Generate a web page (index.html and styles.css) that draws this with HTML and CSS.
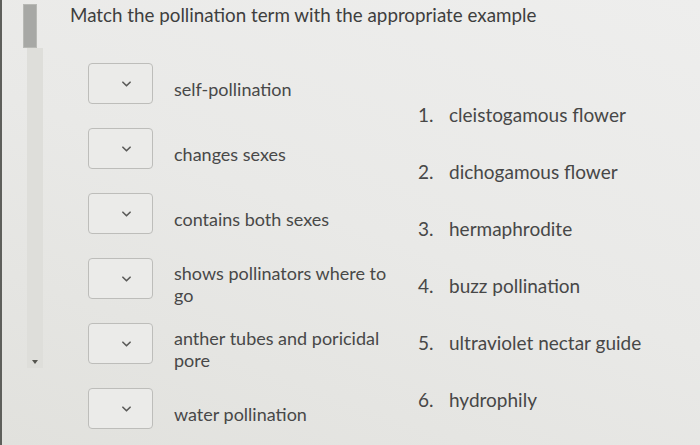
FILE: index.html
```html
<!DOCTYPE html>
<html lang="en">
<head>
<meta charset="utf-8">
<title>Match the pollination term</title>
<link rel="stylesheet" href="styles.css">
</head>
<body>
<div class="screen">
  <div class="edge"></div>
  <div class="scroll">
    <div class="thumb"></div>
    <div class="track"><span class="arrow"></span></div>
  </div>
  <main class="main">
    <h1 class="title">Match the pollination term with the appropriate example</h1>
    <div class="quiz">
      <ul class="terms">
        <li class="row"><span class="select"><svg class="chev" viewBox="0 0 10 6"><path d="M1 1l4 4 4-4"/></svg></span><span class="term">self-pollination</span></li>
        <li class="row"><span class="select"><svg class="chev" viewBox="0 0 10 6"><path d="M1 1l4 4 4-4"/></svg></span><span class="term">changes sexes</span></li>
        <li class="row"><span class="select"><svg class="chev" viewBox="0 0 10 6"><path d="M1 1l4 4 4-4"/></svg></span><span class="term">contains both sexes</span></li>
        <li class="row"><span class="select"><svg class="chev" viewBox="0 0 10 6"><path d="M1 1l4 4 4-4"/></svg></span><span class="term">shows pollinators where to go</span></li>
        <li class="row"><span class="select"><svg class="chev" viewBox="0 0 10 6"><path d="M1 1l4 4 4-4"/></svg></span><span class="term">anther tubes and poricidal pore</span></li>
        <li class="row"><span class="select"><svg class="chev" viewBox="0 0 10 6"><path d="M1 1l4 4 4-4"/></svg></span><span class="term">water pollination</span></li>
      </ul>
      <ol class="answers">
        <li class="answer"><span class="num">1.</span><span>cleistogamous flower</span></li>
        <li class="answer"><span class="num">2.</span><span>dichogamous flower</span></li>
        <li class="answer"><span class="num">3.</span><span>hermaphrodite</span></li>
        <li class="answer"><span class="num">4.</span><span>buzz pollination</span></li>
        <li class="answer"><span class="num">5.</span><span>ultraviolet nectar guide</span></li>
        <li class="answer"><span class="num">6.</span><span>hydrophily</span></li>
      </ol>
    </div>
  </main>
</div>
</body>
</html>
```

FILE: styles.css
```css
* { box-sizing: border-box; }
html, body { margin: 0; padding: 0; }
body {
  width: 700px;
  height: 445px;
  overflow: hidden;
  font-family: Lato, "Open Sans", "Liberation Sans", sans-serif;
  color: #484848;
  background: linear-gradient(200deg, #eeeeed 0%, #e9e9e7 50%, #e1e1dd 100%);
}
.screen {
  display: flex;
  height: 445px;
}
.edge {
  width: 2px;
  background: #5e5f5b;
  flex: none;
}
.scroll {
  flex: none;
  width: 16px;
  margin-left: 21px;
  display: flex;
  flex-direction: column;
  padding-top: 4px;
}
.thumb {
  width: 14px;
  height: 44px;
  background: #a7a8a5;
  border: 1px solid #b8b9b5;
}
.track {
  width: 16px;
  height: 320px;
  margin-left: 4px;
  background: #dededa;
  display: flex;
  flex-direction: column;
  justify-content: flex-end;
  align-items: center;
  padding-bottom: 4px;
}
.arrow {
  width: 0;
  height: 0;
  border-left: 3px solid transparent;
  border-right: 3px solid transparent;
  border-top: 4px solid #55554f;
}
.main {
  flex: 1;
  padding-left: 31px;
}
.title {
  margin: 0;
  padding-top: 2px;
  font-size: 18.8px;
  font-weight: 400;
  line-height: 26px;
  color: #3e3e3e;
}
.quiz {
  display: flex;
}
.terms {
  list-style: none;
  margin: 0;
  padding: 35px 0 0 18px;
  width: 348px;
  display: flex;
  flex-direction: column;
  gap: 24px;
}
.row {
  display: flex;
  align-items: center;
  height: 41px;
}
.select {
  flex: none;
  width: 65px;
  height: 41px;
  border: 1px solid #bdbdba;
  border-radius: 4px;
  background: #ebebe9;
  display: flex;
  align-items: center;
  justify-content: flex-end;
  padding-right: 21px;
}
.chev {
  width: 9px;
  height: 6px;
  fill: none;
  stroke: #5a5a58;
  stroke-width: 1.8;
  stroke-linecap: round;
  stroke-linejoin: round;
}
.term {
  margin-left: 21px;
  width: 225px;
  font-size: 18px;
  line-height: 22px;
  padding-top: 10px;
}
.answers {
  list-style: none;
  margin: 0;
  padding: 76px 0 0 0;
  display: flex;
  flex-direction: column;
  gap: 35px;
}
.answer {
  display: flex;
  font-size: 19px;
  line-height: 22px;
  color: #474747;
}
.num {
  width: 31px;
  flex: none;
}
```
